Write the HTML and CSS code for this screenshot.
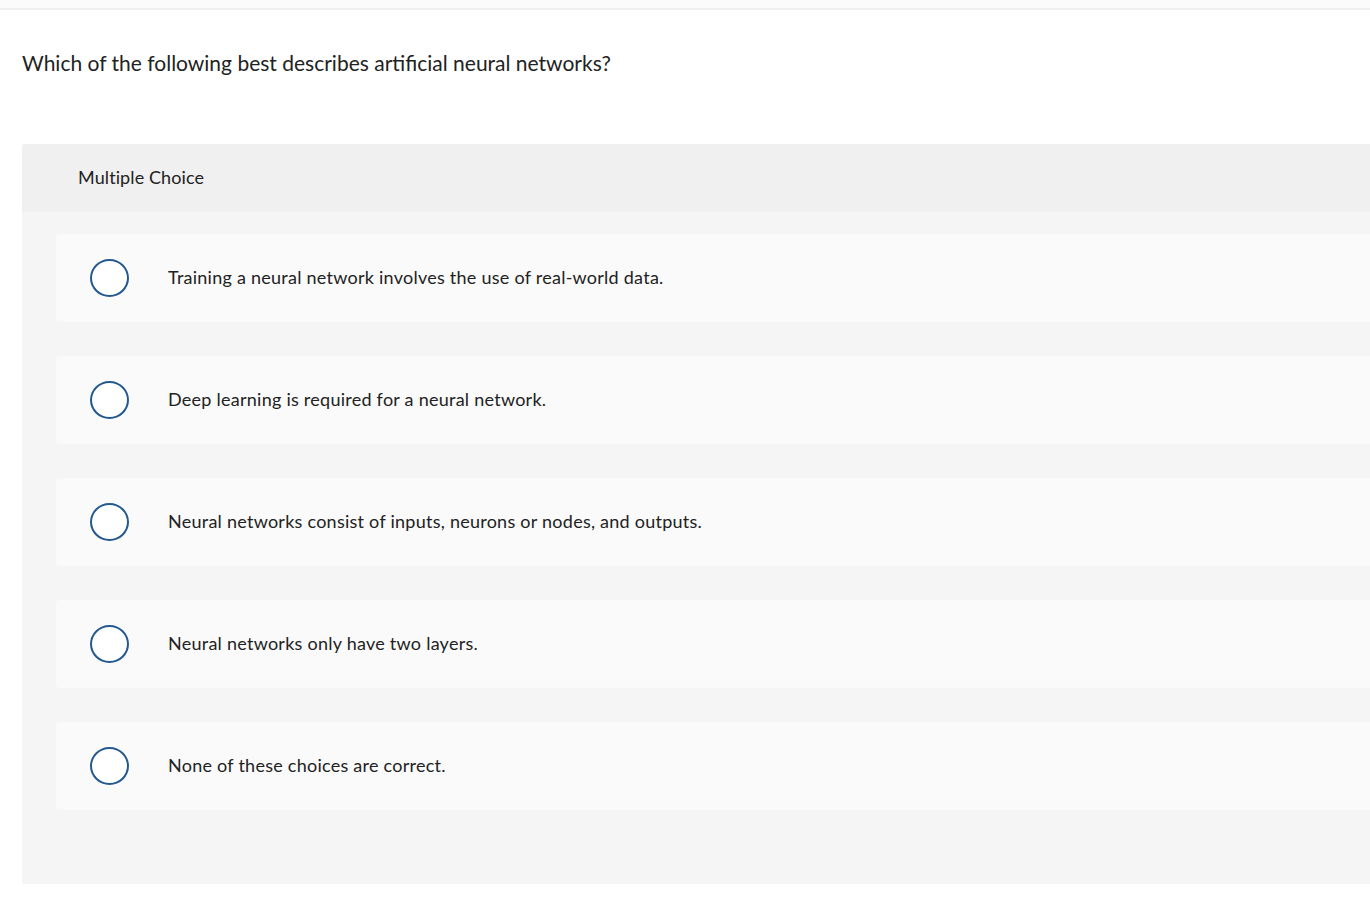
FILE: index.html
```html
<!DOCTYPE html>
<html>
<head>
<meta charset="utf-8">
<link rel="stylesheet" href="styles.css">
</head>
<body>
<div class="topbar"></div>
<main class="content">
  <p class="question">Which of the following best describes artificial neural networks?</p>
  <section class="panel">
    <div class="panel-head">Multiple Choice</div>
    <div class="panel-body">
      <div class="option"><span class="radio"></span><span class="label">Training a neural network involves the use of real-world data.</span></div>
      <div class="option"><span class="radio"></span><span class="label">Deep learning is required for a neural network.</span></div>
      <div class="option"><span class="radio"></span><span class="label">Neural networks consist of inputs, neurons or nodes, and outputs.</span></div>
      <div class="option"><span class="radio"></span><span class="label">Neural networks only have two layers.</span></div>
      <div class="option"><span class="radio"></span><span class="label">None of these choices are correct.</span></div>
    </div>
  </section>
</main>
</body>
</html>
```
FILE: styles.css
```css
html, body {
  margin: 0;
  padding: 0;
  background: #ffffff;
  font-family: Lato, "Open Sans", "Liberation Sans", sans-serif;
  color: #222222;
  overflow: hidden;
}
.topbar {
  height: 8px;
  background: #fbfbfb;
  border-bottom: 2px solid #efefef;
}
.content {
  padding-left: 22px;
}
.question {
  margin: 0;
  padding-top: 40px;
  height: 94px;
  box-sizing: border-box;
  font-size: 21px;
  line-height: 26px;
  color: #222;
}
.panel {
  margin-top: 40px;
  background: #f5f5f5;
  border-radius: 3px 0 0 3px;
  width: 1360px;
  overflow: hidden;
}
.panel-head {
  background: #f0f0f0;
  height: 68px;
  padding-left: 56px;
  padding-bottom: 2px;
  box-sizing: border-box;
  display: flex;
  align-items: center;
  font-size: 18px;
  letter-spacing: 0.1px;
  color: #222;
}
.panel-body {
  padding: 22px 0 74px 34px;
  display: flex;
  flex-direction: column;
  gap: 34px;
}
.option {
  background: #fafafa;
  height: 88px;
  border-radius: 4px 0 0 4px;
  display: flex;
  align-items: center;
  padding-left: 34px;
}
.radio {
  width: 35px;
  height: 34px;
  border: 2px solid #24598f;
  border-radius: 50%;
  background: #fff;
  flex: none;
}
.label {
  margin-left: 39px;
  padding-bottom: 2px;
  font-size: 18px;
  letter-spacing: 0.25px;
  color: #222;
}
```
